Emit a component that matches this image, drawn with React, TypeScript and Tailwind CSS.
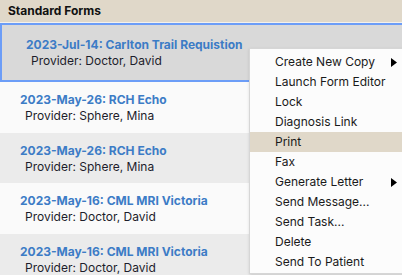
import React from 'react';

interface FormRow {
  title: string;
  provider: string;
}

const rows: FormRow[] = [
  { title: '2023-May-26: RCH Echo', provider: 'Sphere, Mina' },
  { title: '2023-May-26: RCH Echo', provider: 'Sphere, Mina' },
  { title: '2023-May-16: CML MRI Victoria', provider: 'Doctor, David' },
  { title: '2023-May-16: CML MRI Victoria', provider: 'Doctor, David' },
];

const menuItems: { label: string; sub?: boolean; active?: boolean }[] = [
  { label: 'Create New Copy', sub: true },
  { label: 'Launch Form Editor' },
  { label: 'Lock' },
  { label: 'Diagnosis Link' },
  { label: 'Print', active: true },
  { label: 'Fax' },
  { label: 'Generate Letter', sub: true },
  { label: 'Send Message...' },
  { label: 'Send Task...' },
  { label: 'Delete' },
  { label: 'Send To Patient' },
];

const App: React.FC = () => {
  return (
    <div className="relative w-[402px] h-[275px] overflow-hidden bg-[#fafafa] font-['Inter',sans-serif]">
      <div className="h-[22px] bg-[#e0d8c9] flex items-center px-2 text-[12px] font-bold text-[#111]">
        Standard Forms
      </div>
      <div className="h-px bg-[#f4f1ec]" />

      <div className="w-[430px] h-[59px] border-2 border-[#6c9df7] bg-[#d9d9d9] pl-6 pt-3">
        <div className="text-[12px] leading-4 font-bold text-[#3c7cc6]">2023-Jul-14: Carlton Trail Requistion</div>
        <div className="text-[12px] leading-4 pl-[5px] text-[#1d1d2b]">Provider: Doctor, David</div>
      </div>

      {rows.map((row, i) => (
        <div
          key={i}
          className={`h-[50.5px] pl-5 pt-[10px] ${i % 2 === 0 ? 'bg-[#fafafa]' : 'bg-[#ebebeb]'}`}
        >
          <div className="text-[12px] leading-4 font-bold text-[#3c7cc6]">{row.title}</div>
          <div className="text-[12px] leading-4 pl-[5px] text-[#1d1d2b]">Provider: {row.provider}</div>
        </div>
      ))}

      <div className="absolute left-[249px] top-[48px] w-[170px] bg-[#fcfcfc] border border-[#d6d6d6] pt-[3px] pb-px shadow-sm">
        {menuItems.map(item => (
          <div
            key={item.label}
            className={`relative h-5 flex items-center pl-[25px] text-[12px] text-[#1a1a1a] ${item.active ? 'bg-[#e0d8c9]' : ''}`}
          >
            {item.label}
            {item.sub && (
              <svg className="absolute left-[141px] top-[6px]" width="6" height="9" viewBox="0 0 6 9">
                <path d="M0 0 L6 4.5 L0 9 Z" fill="#000" />
              </svg>
            )}
          </div>
        ))}
      </div>
    </div>
  );
};

export default App;
